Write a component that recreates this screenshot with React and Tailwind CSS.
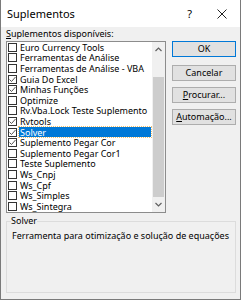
import React from "react";

const items = [
  ["Euro Currency Tools", false],
  ["Ferramentas de Análise", false],
  ["Ferramentas de Análise - VBA", false],
  ["Guia Do Excel", true],
  ["Minhas Funções", true],
  ["Optimize", false],
  ["Rv.Vba.Lock Teste Suplemento", false],
  ["Rvtools", true],
  ["Solver", true, true],
  ["Suplemento Pegar Cor", true],
  ["Suplemento Pegar Cor1", false],
  ["Teste Suplemento", false],
  ["Ws_Cnpj", false],
  ["Ws_Cpf", false],
  ["Ws_Simples", false],
  ["Ws_Sintegra", false],
];

function Check({ on }) {
  return (
    <div className="w-[9px] h-[9px] border border-[#333] bg-white shrink-0 flex items-center justify-center">
      {on && (
        <svg width="7" height="7" viewBox="0 0 7 7">
          <polyline points="0.5,3.5 2.5,5.5 6.5,1" fill="none" stroke="#555" strokeWidth="1" />
        </svg>
      )}
    </div>
  );
}

function Btn({ children, primary, className = "" }) {
  return (
    <div
      className={
        "h-[16px] flex items-center justify-center bg-[#e1e1e1] border text-[9px] leading-[10px] " +
        (primary ? "border-[#0078d7] " : "border-[#adadad] ") +
        className
      }
    >
      {children}
    </div>
  );
}

export default function App() {
  return (
    <div
      className="w-[241px] h-[300px] flex flex-col border-x border-b border-[#7a7a7a] bg-[#f0f0f0] text-black"
      style={{ fontFamily: '"Noto Sans", "Open Sans", sans-serif' }}
    >
      <div className="h-[27px] bg-white flex items-center pl-[6px] shrink-0">
        <span className="text-[11px] leading-[12px]">Suplementos</span>
        <span className="ml-auto text-[11px] leading-[12px] mr-[25px]">?</span>
        <svg width="10" height="10" viewBox="0 0 10 10" className="mr-[13px]">
          <path d="M0.5 0.5 L9.5 9.5 M9.5 0.5 L0.5 9.5" stroke="#222" strokeWidth="1" />
        </svg>
      </div>
      <div className="flex-1 flex flex-col pl-[5px] pr-[4px]">
        <div className="h-[14px] flex items-center text-[9px] leading-[10px]">
          <span><span className="underline">S</span>uplementos disponíveis:</span>
        </div>
        <div className="flex">
          <div className="w-[160px] h-[172px] border border-[#8c8c8c] bg-white flex">
            <div className="flex-1 flex flex-col">
              {items.map(([name, on, sel]) => (
                <div key={name} className="h-[10.6px] flex items-center pl-[1px]">
                  <Check on={on} />
                  <div
                    className={
                      "ml-[2px] h-full flex items-center pl-[1px] text-[9px] leading-[9px] whitespace-nowrap " +
                      (sel ? "bg-[#0078d7] text-white w-[132px] outline outline-1 outline-dotted outline-[#f0c070]" : "")
                    }
                  >
                    {name}
                  </div>
                </div>
              ))}
            </div>
            <div className="w-[13px] bg-[#f0f0f0] flex flex-col">
              <div className="h-[15px] flex items-center justify-center">
                <svg width="7" height="5" viewBox="0 0 7 5">
                  <polyline points="0.5,4 3.5,1 6.5,4" fill="none" stroke="#606060" strokeWidth="1.2" />
                </svg>
              </div>
              <div className="flex-1 flex flex-col px-[1px]">
                <div className="h-[20px]" />
                <div className="flex-1 bg-[#cdcdcd]" />
              </div>
              <div className="h-[15px] flex items-center justify-center">
                <svg width="7" height="5" viewBox="0 0 7 5">
                  <polyline points="0.5,1 3.5,4 6.5,1" fill="none" stroke="#606060" strokeWidth="1.2" />
                </svg>
              </div>
            </div>
          </div>
          <div className="ml-[6px] w-[64px] flex flex-col">
            <Btn primary className="mb-[8px]">OK</Btn>
            <Btn className="mb-[6px]">Cancelar</Btn>
            <Btn className="mb-[6px]"><span><span className="underline">P</span>rocurar...</span></Btn>
            <Btn><span><span className="underline">A</span>utomação...</span></Btn>
          </div>
        </div>
        <fieldset className="mt-[3px] h-[77px] border border-[#dcdcdc] px-[5px]">
          <legend className="ml-[-1px] px-0 text-[9px] leading-[10px]">Solver</legend>
          <div className="mt-[5px] text-[9px] leading-[10px] whitespace-nowrap">
            Ferramenta para otimização e solução de equações
          </div>
        </fieldset>
      </div>
    </div>
  );
}
